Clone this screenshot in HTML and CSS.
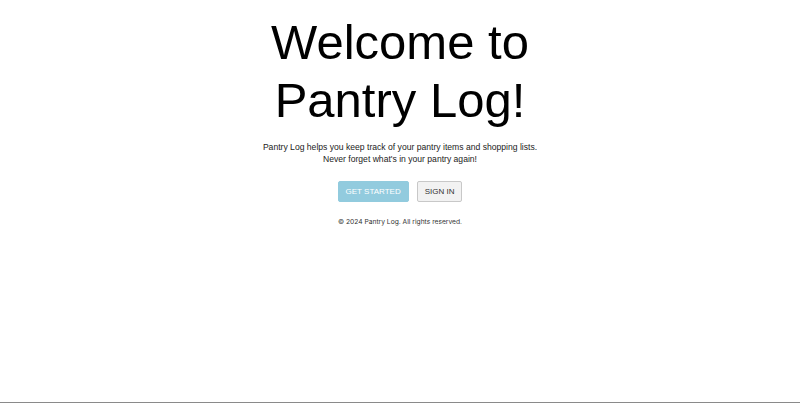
FILE: index.html
```html
<!DOCTYPE html>
<html lang="en">
<head>
<meta charset="UTF-8">
<meta name="viewport" content="width=device-width, initial-scale=1.0">
<title>Pantry Log</title>
<link rel="stylesheet" href="styles.css">
</head>
<body>

<div class="page">
    <div class="hero">
        <h1>Welcome to<br>Pantry Log!</h1>
        <p class="intro">Pantry Log helps you keep track of your pantry items and shopping lists.<br>Never forget what's in your pantry again!</p>
        <div class="actions">
            <button class="btn btn-primary">Get Started</button>
            <button class="btn btn-outline">Sign In</button>
        </div>
        <p class="footer">&copy; 2024 Pantry Log. All rights reserved.</p>
    </div>
</div>

</body>
</html>
```

FILE: styles.css
```css
body {
    font-family: "Liberation Sans", Arial, sans-serif;
    background-color: #fff;
    margin: 0;
    padding: 0;
}
.page {
    min-height: 403px;
    box-sizing: border-box;
    border-bottom: 1px solid #8a8a8a;
}
.hero {
    text-align: center;
    padding-top: 14px;
}
h1 {
    font-size: 49px;
    font-weight: normal;
    line-height: 1.18;
    color: #000;
    margin: 0;
}
.intro {
    font-size: 8.6px;
    line-height: 12px;
    color: #222;
    margin: 11px 0 0;
}
.actions {
    display: flex;
    justify-content: center;
    gap: 8px;
    margin-top: 16px;
}
.btn {
    font-family: "Liberation Sans", Arial, sans-serif;
    font-size: 8px;
    text-transform: uppercase;
    height: 21px;
    padding: 0 7px;
    border-radius: 2px;
    cursor: pointer;
}
.btn-primary {
    background-color: #92cbde;
    color: #fff;
    border: 1px solid #92cbde;
}
.btn-outline {
    background-color: #f2f2f2;
    color: #333;
    border: 1px solid #c8c8c8;
}
.footer {
    font-family: Inter, "Liberation Sans", sans-serif;
    font-size: 6.7px;
    color: #333;
    margin: 16px 0 0;
}
```
